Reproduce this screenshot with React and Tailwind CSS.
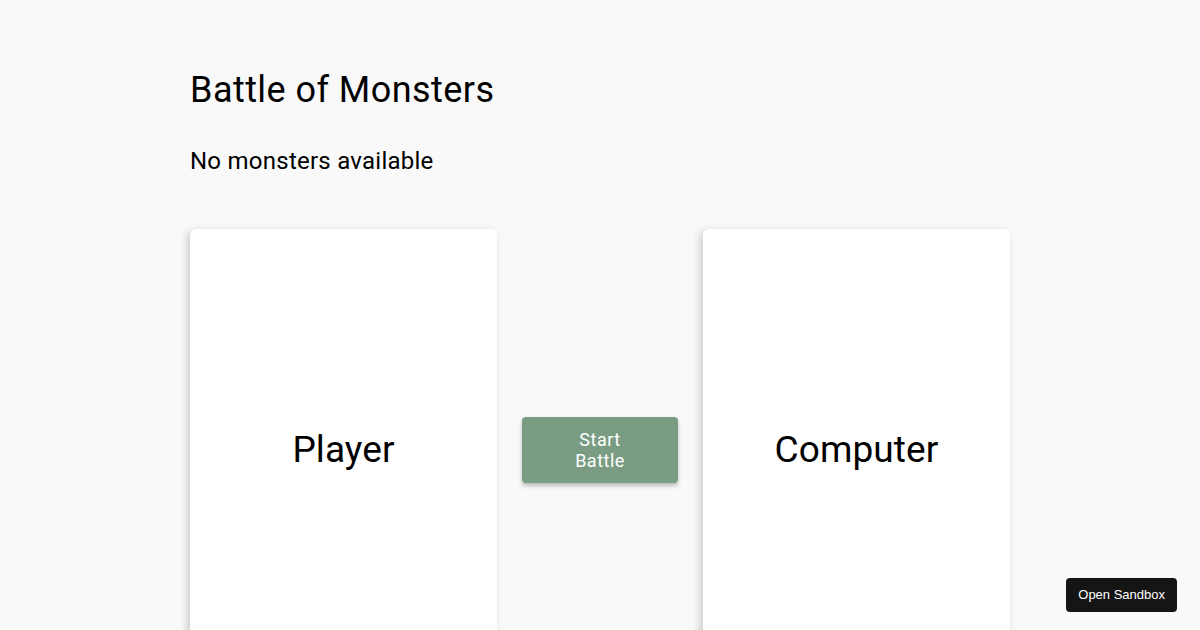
import React from "react";

const Card = ({ label }) => {
  return (
    <div className="w-[307px] h-[442px] bg-white rounded-md shadow-[-3px_2px_8px_rgba(0,0,0,0.18)] flex items-center justify-center">
      <span className="text-[37px] tracking-[0.1px] text-black">{label}</span>
    </div>
  );
};

const App = () => {
  return (
    <div className="min-h-screen bg-[#f9f9f9] font-['Roboto',sans-serif] overflow-hidden h-[630px]">
      <div className="w-[820px] mx-auto pt-[69px]">
        <h1 className="text-[36px] leading-[42px] tracking-[0.45px] text-black">Battle of Monsters</h1>
        <p className="mt-[36px] text-[24px] leading-[28px] tracking-[0.25px] text-black">No monsters available</p>
        <div className="mt-[54px] flex items-center justify-between">
          <Card label="Player" />
          <button className="w-[156px] h-[66px] bg-[#7a9c83] rounded-[4px] text-white text-[18px] leading-[21px] tracking-[0.5px] shadow-[0_3px_4px_rgba(0,0,0,0.25)] flex flex-col items-center justify-center">
            <span>Start</span>
            <span>Battle</span>
          </button>
          <Card label="Computer" />
        </div>
      </div>
      <button className="fixed right-[23px] bottom-[18px] bg-[#151515] text-white text-[13px] font-['Liberation_Sans',sans-serif] rounded-[4px] px-[12px] h-[34px]">
        Open Sandbox
      </button>
    </div>
  );
};

export default App;
